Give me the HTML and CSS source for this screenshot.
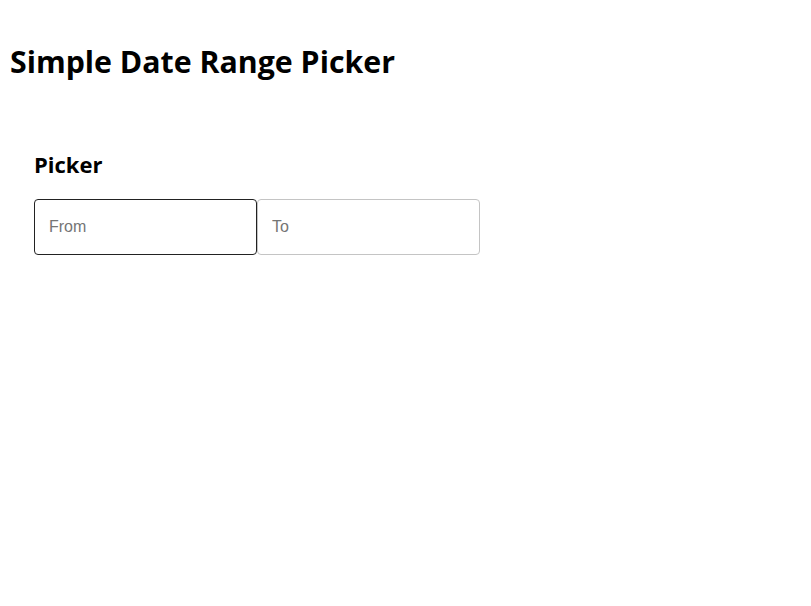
FILE: index.html
```html
<!DOCTYPE html>
<html>
<head>
<meta charset="utf-8">
<link rel="stylesheet" href="styles.css">
</head>
<body>
<h1 class="title">Simple Date Range Picker</h1>
<section class="panel">
  <h2 class="panel-title">Picker</h2>
  <div class="range">
    <input class="field field-active" type="text" placeholder="From">
    <input class="field" type="text" placeholder="To">
  </div>
</section>
</body>
</html>
```
FILE: styles.css
```css
body {
  margin: 8px;
  font-family: "Open Sans", "Noto Sans", sans-serif;
  background: #fff;
  color: #000;
}
.title {
  font-size: 30.3px;
  font-weight: 700;
  margin: 32px 0 0 2px;
  line-height: 44px;
}
.panel {
  padding: 66px 26px 44px;
}
.panel-title {
  font-size: 22px;
  font-weight: 700;
  margin: 0 0 21px 0;
  line-height: 28px;
}
.range {
  display: flex;
}
.field {
  width: 223px;
  height: 56px;
  box-sizing: border-box;
  border: 1px solid #c4c4c4;
  border-radius: 4px;
  padding: 0 14px;
  font-family: "Liberation Sans", Arial, sans-serif;
  font-size: 16px;
  color: #333;
  outline: none;
  margin: 0;
}
.field::placeholder {
  color: #757575;
}
.field-active {
  border-color: #222;
}
```
